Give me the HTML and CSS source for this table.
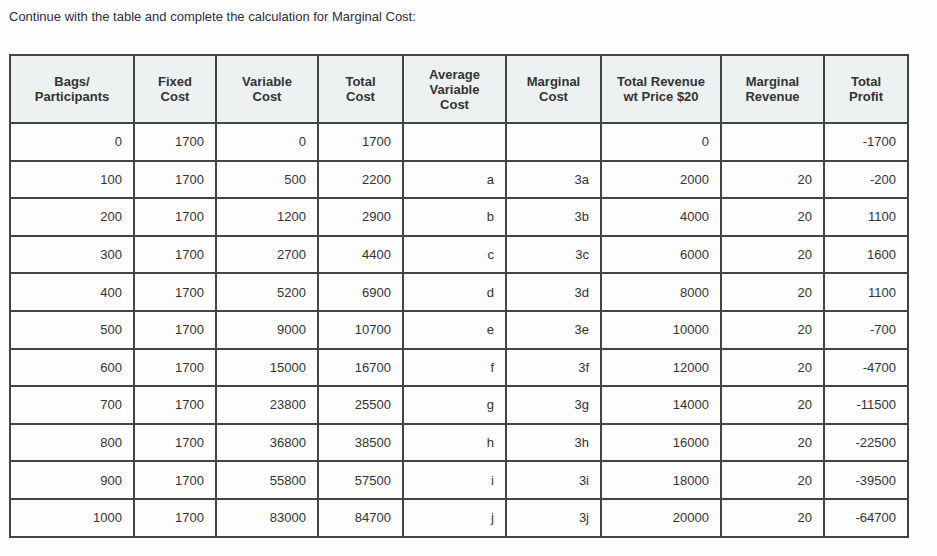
FILE: index.html
```html
<!DOCTYPE html>
<html>
<head>
<meta charset="utf-8">
<link rel="stylesheet" href="styles.css">
</head>
<body>
<p class="intro">Continue with the table and complete the calculation for Marginal Cost:</p>
<table class="cost-table">
  <colgroup>
    <col class="c1"><col class="c2"><col class="c3"><col class="c4"><col class="c5"><col class="c6"><col class="c7"><col class="c8"><col class="c9">
  </colgroup>
  <thead>
    <tr>
      <th>Bags/<br>Participants</th>
      <th>Fixed<br>Cost</th>
      <th>Variable<br>Cost</th>
      <th>Total<br>Cost</th>
      <th>Average<br>Variable<br>Cost</th>
      <th>Marginal<br>Cost</th>
      <th>Total Revenue<br>wt Price $20</th>
      <th>Marginal<br>Revenue</th>
      <th>Total<br>Profit</th>
    </tr>
  </thead>
  <tbody>
    <tr><td>0</td><td>1700</td><td>0</td><td>1700</td><td></td><td></td><td>0</td><td></td><td>-1700</td></tr>
    <tr><td>100</td><td>1700</td><td>500</td><td>2200</td><td>a</td><td>3a</td><td>2000</td><td>20</td><td>-200</td></tr>
    <tr><td>200</td><td>1700</td><td>1200</td><td>2900</td><td>b</td><td>3b</td><td>4000</td><td>20</td><td>1100</td></tr>
    <tr><td>300</td><td>1700</td><td>2700</td><td>4400</td><td>c</td><td>3c</td><td>6000</td><td>20</td><td>1600</td></tr>
    <tr><td>400</td><td>1700</td><td>5200</td><td>6900</td><td>d</td><td>3d</td><td>8000</td><td>20</td><td>1100</td></tr>
    <tr><td>500</td><td>1700</td><td>9000</td><td>10700</td><td>e</td><td>3e</td><td>10000</td><td>20</td><td>-700</td></tr>
    <tr><td>600</td><td>1700</td><td>15000</td><td>16700</td><td>f</td><td>3f</td><td>12000</td><td>20</td><td>-4700</td></tr>
    <tr><td>700</td><td>1700</td><td>23800</td><td>25500</td><td>g</td><td>3g</td><td>14000</td><td>20</td><td>-11500</td></tr>
    <tr><td>800</td><td>1700</td><td>36800</td><td>38500</td><td>h</td><td>3h</td><td>16000</td><td>20</td><td>-22500</td></tr>
    <tr><td>900</td><td>1700</td><td>55800</td><td>57500</td><td>i</td><td>3i</td><td>18000</td><td>20</td><td>-39500</td></tr>
    <tr><td>1000</td><td>1700</td><td>83000</td><td>84700</td><td>j</td><td>3j</td><td>20000</td><td>20</td><td>-64700</td></tr>
  </tbody>
</table>
</body>
</html>
```

FILE: styles.css
```css
html, body {
  background: #fdfdfd;
}
body {
  margin: 0;
  padding: 0 0 0 9px;
  font-family: "Liberation Sans", Arial, sans-serif;
  color: #333333;
}
.intro {
  margin: 0;
  padding-top: 9px;
  font-size: 13px;
  line-height: 15px;
  color: #2d2d3d;
}
.cost-table {
  margin-top: 30px;
  border-collapse: collapse;
  table-layout: fixed;
  width: 900px;
  border: 2px solid #444444;
  font-size: 13px;
}
.c1 { width: 124px; }
.c2 { width: 82px; }
.c3 { width: 102px; }
.c4 { width: 85px; }
.c5 { width: 103px; }
.c6 { width: 95px; }
.c7 { width: 120px; }
.c8 { width: 103px; }
.c9 { width: 84px; }
.cost-table th,
.cost-table td {
  border: 2px solid #444444;
  padding: 0 11px 0 4px;
}
.cost-table th {
  background: #eef1f2;
  font-weight: bold;
  text-align: center;
  line-height: 15px;
  height: 66px;
  padding: 0 4px;
  color: #333333;
}
.cost-table td {
  background: #fdfdfd;
  text-align: right;
  height: 35.6px;
  line-height: 15px;
  color: #333333;
}
```
